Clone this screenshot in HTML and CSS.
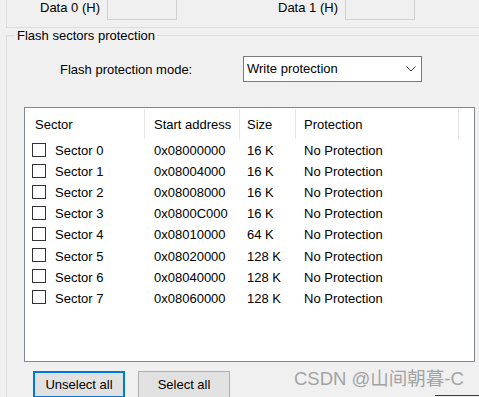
FILE: index.html
```html
<!DOCTYPE html>
<html lang="en">
<head>
<meta charset="utf-8">
<title>Flash sectors protection</title>
<link rel="stylesheet" href="styles.css">
</head>
<body>
<div class="prev-group">
  <span class="lbl">Data 0 (H)</span><span class="textbox"></span>
  <span class="lbl lbl-second">Data 1 (H)</span><span class="textbox"></span>
</div>
<fieldset class="group">
  <legend class="group-title">Flash sectors protection</legend>
  <div class="mode-row">
    <span class="mode-label">Flash protection mode:</span>
    <div class="combo">
      <span class="combo-text">Write protection</span>
      <svg class="chevron" width="10" height="6" viewBox="0 0 10 6"><path d="M0.5 0.5 L5 5 L9.5 0.5" fill="none" stroke="#3a3a3a" stroke-width="1"/></svg>
    </div>
  </div>
  <div class="list">
    <div class="list-head">
      <div class="hcell c1">Sector</div>
      <div class="hcell c2">Start address</div>
      <div class="hcell c3">Size</div>
      <div class="hcell c4">Protection</div>
    </div>
    <div class="list-row"><div class="cell c1"><span class="check"></span>Sector 0</div><div class="cell c2">0x08000000</div><div class="cell c3">16 K</div><div class="cell c4">No Protection</div></div>
    <div class="list-row"><div class="cell c1"><span class="check"></span>Sector 1</div><div class="cell c2">0x08004000</div><div class="cell c3">16 K</div><div class="cell c4">No Protection</div></div>
    <div class="list-row"><div class="cell c1"><span class="check"></span>Sector 2</div><div class="cell c2">0x08008000</div><div class="cell c3">16 K</div><div class="cell c4">No Protection</div></div>
    <div class="list-row"><div class="cell c1"><span class="check"></span>Sector 3</div><div class="cell c2">0x0800C000</div><div class="cell c3">16 K</div><div class="cell c4">No Protection</div></div>
    <div class="list-row"><div class="cell c1"><span class="check"></span>Sector 4</div><div class="cell c2">0x08010000</div><div class="cell c3">64 K</div><div class="cell c4">No Protection</div></div>
    <div class="list-row"><div class="cell c1"><span class="check"></span>Sector 5</div><div class="cell c2">0x08020000</div><div class="cell c3">128 K</div><div class="cell c4">No Protection</div></div>
    <div class="list-row"><div class="cell c1"><span class="check"></span>Sector 6</div><div class="cell c2">0x08040000</div><div class="cell c3">128 K</div><div class="cell c4">No Protection</div></div>
    <div class="list-row"><div class="cell c1"><span class="check"></span>Sector 7</div><div class="cell c2">0x08060000</div><div class="cell c3">128 K</div><div class="cell c4">No Protection</div></div>
  </div>
  <div class="buttons">
    <button class="btn btn-default">Unselect all</button>
    <button class="btn">Select all</button>
    <span class="btn-partial"></span>
  </div>
</fieldset>
<div class="watermark">CSDN @山间朝暮-C</div>
</body>
</html>
```
FILE: styles.css
```css
html, body {
  margin: 0;
  padding: 0;
}
body {
  position: relative;
  width: 479px;
  height: 397px;
  overflow: hidden;
  background: #f0f0f0;
  color: #000;
  font-family: "Liberation Sans", Arial, sans-serif;
  font-size: 13px;
  line-height: 15px;
}
.prev-group {
  display: flex;
  align-items: flex-start;
  box-sizing: border-box;
  height: 28px;
  margin-left: 6px;
  padding-left: 33px;
  border-left: 1px solid #dcdcdc;
  border-bottom: 1px solid #dcdcdc;
}
.lbl {
  width: 67px;
  line-height: 15px;
}
.lbl-second {
  margin-left: 101px;
}
.textbox {
  box-sizing: border-box;
  width: 70px;
  height: 24px;
  margin-top: -4px;
  border: 1px solid #d0d0d0;
}
.group {
  margin: 0 0 0 6px;
  padding: 0;
  min-width: 0;
  border: 1px solid #dcdcdc;
  border-right: 0;
  border-bottom: 0;
}
.group-title {
  margin-left: 8px;
  padding: 0 2px;
  line-height: 15px;
}
.mode-row {
  display: flex;
  align-items: center;
  height: 26px;
  margin: 13px 0 0 53px;
}
.mode-label {
  width: 183px;
}
.combo {
  box-sizing: border-box;
  display: flex;
  align-items: center;
  justify-content: space-between;
  width: 179px;
  height: 26px;
  padding: 0 5px 1px 3px;
  border: 1px solid #7a7a7a;
  background: #fff;
}
.chevron {
  display: block;
}
.list {
  box-sizing: border-box;
  width: 451px;
  height: 255px;
  margin: 25px 0 0 17px;
  border: 1px solid #828790;
  background: #fff;
}
.list-head,
.list-row {
  display: grid;
  grid-template-columns: 120px 95px 56px 163px;
}
.list-head {
  height: 32px;
  align-items: center;
}
.hcell {
  box-sizing: border-box;
  display: flex;
  align-items: center;
  height: 30px;
  border-right: 1px solid #e5e5e5;
  white-space: nowrap;
}
.list-row {
  height: 21.1px;
  align-items: center;
}
.cell {
  display: flex;
  align-items: center;
  white-space: nowrap;
}
.c1 { padding-left: 10px; }
.c2 { padding-left: 9px; }
.c3 { padding-left: 7px; }
.c4 { padding-left: 8px; }
.cell.c1 {
  padding-left: 7px;
  gap: 9px;
}
.check {
  box-sizing: border-box;
  width: 14px;
  height: 14px;
  margin-top: -2px;
  border: 1px solid #333;
  background: #fff;
}
.buttons {
  display: flex;
  align-items: flex-start;
  gap: 13px;
  margin: 9px 0 0 26px;
}
.btn {
  box-sizing: border-box;
  width: 92px;
  height: 27px;
  padding: 0;
  border: 1px solid #adadad;
  background: #e1e1e1;
  color: #000;
  font-family: "Liberation Sans", Arial, sans-serif;
  font-size: 13px;
  line-height: 15px;
}
.btn-default {
  border: 2px solid #0078d7;
}
.btn-partial {
  box-sizing: border-box;
  width: 44px;
  height: 6px;
  margin: 24px 0 0 auto;
  border-top: 1px solid #3c3c3c;
}
.watermark {
  position: absolute;
  left: 294px;
  top: 369px;
  font-family: "Liberation Sans", "Noto Sans CJK SC", sans-serif;
  font-size: 18.5px;
  line-height: 20px;
  color: #a3a3a3;
  white-space: nowrap;
}
```
